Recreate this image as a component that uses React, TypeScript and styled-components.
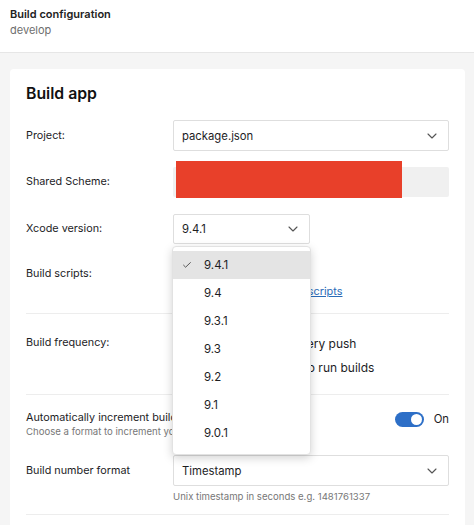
import React from 'react';
import styled, { createGlobalStyle } from 'styled-components';

const Global = createGlobalStyle`
  html, body { margin: 0; padding: 0; background: #f5f5f5; }
  body {
    font-family: Inter, "Liberation Sans", Arial, sans-serif;
    color: #1d1d1f;
    -webkit-font-smoothing: antialiased;
  }
`;

const Page = styled.div`
  width: 474px;
  height: 525px;
  overflow: hidden;
  background: #f5f5f5;
`;

const Header = styled.header`
  background: #fff;
  height: 53px;
  box-sizing: border-box;
  padding: 6px 10px 0;
  border-bottom: 1px solid #e6e6e6;
`;

const Title = styled.div`
  font-size: 11px;
  font-weight: 600;
  line-height: 16px;
  color: #222;
`;

const Subtitle = styled.div`
  font-size: 11px;
  line-height: 16px;
  color: #6e6e6e;
`;

const Main = styled.main`
  padding: 16px 9px 0 10px;
`;

const Card = styled.section`
  background: #fff;
  border-radius: 4px;
  padding: 15px 16px 20px;
`;

const Heading = styled.h2`
  margin: 0 0 16px;
  font-size: 15.8px;
  font-weight: 600;
  line-height: 20px;
  color: #111;
`;

const Row = styled.div<{ $gap?: number; $top?: number; $align?: string }>`
  display: grid;
  grid-template-columns: 147px 1fr;
  align-items: ${(p) => p.$align || 'center'};
  margin-top: ${(p) => p.$top ?? 0}px;
  margin-bottom: ${(p) => p.$gap ?? 0}px;
`;

const Label = styled.div<{ $lh?: number; $offset?: number }>`
  font-size: 10.8px;
  line-height: ${(p) => p.$lh ?? 16}px;
  margin-top: ${(p) => p.$offset ?? 0}px;
  color: #1d1d1f;
  white-space: nowrap;
`;

const Select = styled.div<{ $width?: number; $height?: number }>`
  display: flex;
  align-items: center;
  justify-content: space-between;
  height: ${(p) => p.$height ?? 31}px;
  width: ${(p) => (p.$width ? `${p.$width}px` : '100%')};
  box-sizing: border-box;
  border: 1px solid #dedede;
  border-radius: 2px;
  padding: 0 11px 0 8px;
  font-size: 11.3px;
  color: #1d1d1f;
  background: #fff;
`;

const Anchor = styled.div`
  position: relative;
  z-index: 5;
`;

const SchemeWrap = styled.div`
  position: relative;
  padding: 6px 0 1px;
`;

const SchemeField = styled.div`
  height: 30px;
  background: #f0f0f0;
  border-radius: 2px;
`;

const Redaction = styled.div`
  position: absolute;
  top: 0;
  left: 3px;
  width: 226px;
  height: 37px;
  background: #e8402a;
`;

const Menu = styled.ul`
  position: absolute;
  top: 32px;
  left: -1px;
  width: 139px;
  margin: 0;
  padding: 4px 0 7px;
  list-style: none;
  background: #fff;
  border: 1px solid #e2e2e2;
  border-radius: 4px;
  box-shadow: 0 3px 10px rgba(0, 0, 0, 0.18);
  box-sizing: border-box;
`;

const MenuItem = styled.li<{ $active?: boolean }>`
  position: relative;
  height: 28px;
  display: flex;
  align-items: center;
  padding-left: 31px;
  font-size: 11.5px;
  color: #1d1d1f;
  background: ${(p) => (p.$active ? '#e4e4e4' : 'transparent')};
`;

const Check = styled.svg`
  position: absolute;
  left: 10px;
  top: 11px;
`;

const Stack = styled.div`
  display: flex;
  flex-direction: column;
`;

const Text = styled.div`
  font-size: 11.3px;
  line-height: 18px;
  color: #1d1d1f;
  white-space: nowrap;
`;

const Link = styled.a`
  font-size: 10.9px;
  line-height: 16px;
  color: #2b6cb8;
  text-decoration: underline;
  white-space: nowrap;
`;

const Divider = styled.hr<{ $top: number; $bottom: number }>`
  border: 0;
  height: 1px;
  background: #ededed;
  margin: ${(p) => p.$top}px 0 ${(p) => p.$bottom}px;
`;

const RadioList = styled.div`
  display: flex;
  flex-direction: column;
  gap: 4px;
`;

const RadioOption = styled.label`
  display: flex;
  align-items: center;
  gap: 8px;
  height: 20px;
  font-size: 12px;
  color: #1d1d1f;
  white-space: nowrap;
`;

const RadioDot = styled.span<{ $on?: boolean }>`
  width: 12px;
  height: 12px;
  border-radius: 50%;
  box-sizing: border-box;
  border: ${(p) => (p.$on ? '4px solid #2d6fc7' : '1px solid #bbb')};
`;

const ToggleRow = styled.div`
  display: flex;
  align-items: flex-start;
  justify-content: space-between;
`;

const LabelStack = styled.div`
  display: flex;
  flex-direction: column;
`;

const Hint = styled.div`
  font-size: 9.6px;
  line-height: 14px;
  color: #777;
  white-space: nowrap;
`;

const Switch = styled.div`
  display: flex;
  align-items: center;
  gap: 10px;
  font-size: 11.3px;
  line-height: 16px;
`;

const Track = styled.span`
  display: inline-flex;
  align-items: center;
  justify-content: flex-end;
  width: 29px;
  height: 15px;
  box-sizing: border-box;
  padding: 2px;
  border-radius: 8px;
  background: #2d6fc7;
`;

const Knob = styled.span`
  width: 11px;
  height: 11px;
  border-radius: 50%;
  background: #fff;
`;

const Chevron = () => (
  <svg width="10" height="6" viewBox="0 0 10 6" fill="none">
    <path d="M1 1l4 4 4-4" stroke="#555" strokeWidth="1.1" strokeLinecap="round" strokeLinejoin="round" />
  </svg>
);

const versions = ['9.4.1', '9.4', '9.3.1', '9.3', '9.2', '9.1', '9.0.1'];

export default function App() {
  return (
    <Page>
      <Global />
      <Header>
        <Title>Build configuration</Title>
        <Subtitle>develop</Subtitle>
      </Header>
      <Main>
        <Card>
          <Heading>Build app</Heading>

          <Row $gap={10}>
            <Label>Project:</Label>
            <Select>
              <span>package.json</span>
              <Chevron />
            </Select>
          </Row>

          <Row $gap={16} $align="start">
            <Label $lh={30} $offset={6}>Shared Scheme:</Label>
            <SchemeWrap>
              <SchemeField />
              <Redaction />
            </SchemeWrap>
          </Row>

          <Row>
            <Label>Xcode version:</Label>
            <Anchor>
              <Select $width={137} $height={30}>
                <span>9.4.1</span>
                <Chevron />
              </Select>
              <Menu>
                {versions.map((v, i) => (
                  <MenuItem key={v} $active={i === 0}>
                    {i === 0 && (
                      <Check width="8" height="6" viewBox="0 0 8 6" fill="none">
                        <path d="M0.6 3.2l2 2 4.8-4.6" stroke="#555" strokeWidth="1" strokeLinecap="round" strokeLinejoin="round" />
                      </Check>
                    )}
                    {v}
                  </MenuItem>
                ))}
              </Menu>
            </Anchor>
          </Row>

          <Row $top={21} $align="start">
            <Label $lh={18}>Build scripts:</Label>
            <Stack>
              <Text>No build scripts</Text>
              <Link href="#">Find out more about build scripts</Link>
            </Stack>
          </Row>

          <Divider $top={14} $bottom={19} />

          <Row $align="start">
            <Label $lh={20}>Build frequency:</Label>
            <RadioList>
              <RadioOption>
                <RadioDot $on />
                Start the build on every push
              </RadioOption>
              <RadioOption>
                <RadioDot />
                Use the dashboard to run builds
              </RadioOption>
            </RadioList>
          </Row>

          <Divider $top={17} $bottom={16} />

          <ToggleRow>
            <LabelStack>
              <Label $lh={14}>Automatically increment build number</Label>
              <Hint>Choose a format to increment your build number</Hint>
            </LabelStack>
            <Switch>
              <Track>
                <Knob />
              </Track>
              On
            </Switch>
          </ToggleRow>

          <Row $top={16} $gap={4}>
            <Label>Build number format</Label>
            <Select>
              <span>Timestamp</span>
              <Chevron />
            </Select>
          </Row>

          <Row>
            <span />
            <Hint>Unix timestamp in seconds e.g. 1481761337</Hint>
          </Row>

          <Divider $top={10} $bottom={0} />
        </Card>
      </Main>
    </Page>
  );
}
